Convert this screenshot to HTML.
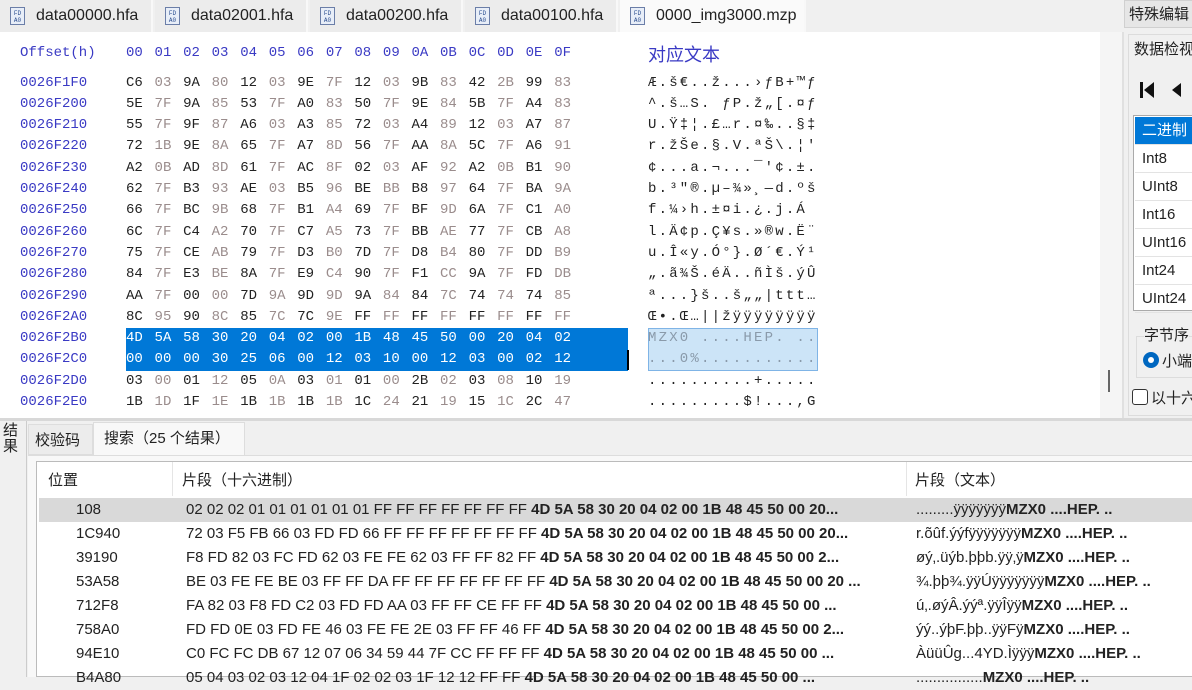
<!DOCTYPE html>
<html><head><meta charset="utf-8"><style>
*{margin:0;padding:0;box-sizing:border-box}
body{width:1192px;height:677px;overflow:hidden;background:#f0f0f0;position:relative;font-family:"Liberation Sans","Noto Sans CJK SC",sans-serif;}
.abs{position:absolute}
.tab{position:absolute;top:0;height:32px;background:#ececec;border-right:2px solid #f8f8f8;font-size:16px;color:#222;line-height:32px;padding-left:36px;white-space:nowrap}
.tab.sel{background:#fafafa}
.ic{position:absolute;left:10px;top:7px;width:15px;height:18px;border:1px solid #6b7ea8;background:#e8eef8;font:6px/7px "Liberation Mono",monospace;color:#2a4d8f;text-align:center;padding-top:2px}
#hex{position:absolute;left:0;top:32px;width:1100px;height:386px;background:#fff}
.r{position:absolute;left:0;height:21px;line-height:21px;white-space:nowrap;font:14px/21px "Liberation Mono",monospace}
.o{position:absolute;left:20px;color:#3a3ac4}
.b{position:absolute;left:126px}
.b span{display:inline-block;width:28.55px;color:#222}
.b span:nth-child(even){color:#9a8c8c}
.t{position:absolute;left:648px;letter-spacing:2.2px;color:#222}
.sel .b span{color:#fff}
.li{height:28px;line-height:28px;padding-left:7px;font-size:15px;border-bottom:1px solid #e3e3e3;color:#222}
.row{position:absolute;left:0;width:1154px;height:24px;line-height:24px;font-size:15px;color:#222;white-space:nowrap}
.row .p{position:absolute;left:37px}
.row .h{position:absolute;left:147px;width:720px;overflow:hidden}
.row .x{position:absolute;left:877px}
.row b{font-weight:bold}
</style></head><body>

<div class="tab" style="left:0;width:153px"><div class="ic">FD<br>A0</div>data00000.hfa</div>
<div class="tab" style="left:155px;width:153px"><div class="ic">FD<br>A0</div>data02001.hfa</div>
<div class="tab" style="left:310px;width:153px"><div class="ic">FD<br>A0</div>data00200.hfa</div>
<div class="tab" style="left:465px;width:153px"><div class="ic">FD<br>A0</div>data00100.hfa</div>
<div class="tab sel" style="left:620px;width:186px"><div class="ic">FD<br>A0</div>0000_img3000.mzp</div>

<div id="hex">
<div class="r" style="top:11px"><span class="o">Offset(h)</span><span class="b" style="color:#3a3ac4"><span style="color:#3a3ac4">00</span><span style="color:#3a3ac4">01</span><span style="color:#3a3ac4">02</span><span style="color:#3a3ac4">03</span><span style="color:#3a3ac4">04</span><span style="color:#3a3ac4">05</span><span style="color:#3a3ac4">06</span><span style="color:#3a3ac4">07</span><span style="color:#3a3ac4">08</span><span style="color:#3a3ac4">09</span><span style="color:#3a3ac4">0A</span><span style="color:#3a3ac4">0B</span><span style="color:#3a3ac4">0C</span><span style="color:#3a3ac4">0D</span><span style="color:#3a3ac4">0E</span><span style="color:#3a3ac4">0F</span></span><span style="position:absolute;left:648px;top:-2px;font:18px 'Liberation Sans','Noto Sans CJK SC',sans-serif;color:#3a3ac4">对应文本</span></div>

<div class="r" style="top:40.5px"><span class="o">0026F1F0</span><span class="b"><span>C6</span><span>03</span><span>9A</span><span>80</span><span>12</span><span>03</span><span>9E</span><span>7F</span><span>12</span><span>03</span><span>9B</span><span>83</span><span>42</span><span>2B</span><span>99</span><span>83</span></span><span class="t">Æ.š€..ž...›ƒB+™ƒ</span></div>
<div class="r" style="top:61.8px"><span class="o">0026F200</span><span class="b"><span>5E</span><span>7F</span><span>9A</span><span>85</span><span>53</span><span>7F</span><span>A0</span><span>83</span><span>50</span><span>7F</span><span>9E</span><span>84</span><span>5B</span><span>7F</span><span>A4</span><span>83</span></span><span class="t">^.š…S. ƒP.ž„[.¤ƒ</span></div>
<div class="r" style="top:83.1px"><span class="o">0026F210</span><span class="b"><span>55</span><span>7F</span><span>9F</span><span>87</span><span>A6</span><span>03</span><span>A3</span><span>85</span><span>72</span><span>03</span><span>A4</span><span>89</span><span>12</span><span>03</span><span>A7</span><span>87</span></span><span class="t">U.Ÿ‡¦.£…r.¤‰..§‡</span></div>
<div class="r" style="top:104.4px"><span class="o">0026F220</span><span class="b"><span>72</span><span>1B</span><span>9E</span><span>8A</span><span>65</span><span>7F</span><span>A7</span><span>8D</span><span>56</span><span>7F</span><span>AA</span><span>8A</span><span>5C</span><span>7F</span><span>A6</span><span>91</span></span><span class="t">r.žŠe.§.V.ªŠ\.¦'</span></div>
<div class="r" style="top:125.7px"><span class="o">0026F230</span><span class="b"><span>A2</span><span>0B</span><span>AD</span><span>8D</span><span>61</span><span>7F</span><span>AC</span><span>8F</span><span>02</span><span>03</span><span>AF</span><span>92</span><span>A2</span><span>0B</span><span>B1</span><span>90</span></span><span class="t">¢...a.¬...¯'¢.±.</span></div>
<div class="r" style="top:147px"><span class="o">0026F240</span><span class="b"><span>62</span><span>7F</span><span>B3</span><span>93</span><span>AE</span><span>03</span><span>B5</span><span>96</span><span>BE</span><span>BB</span><span>B8</span><span>97</span><span>64</span><span>7F</span><span>BA</span><span>9A</span></span><span class="t">b.³"®.µ–¾»¸—d.ºš</span></div>
<div class="r" style="top:168.3px"><span class="o">0026F250</span><span class="b"><span>66</span><span>7F</span><span>BC</span><span>9B</span><span>68</span><span>7F</span><span>B1</span><span>A4</span><span>69</span><span>7F</span><span>BF</span><span>9D</span><span>6A</span><span>7F</span><span>C1</span><span>A0</span></span><span class="t">f.¼›h.±¤i.¿.j.Á</span></div>
<div class="r" style="top:189.6px"><span class="o">0026F260</span><span class="b"><span>6C</span><span>7F</span><span>C4</span><span>A2</span><span>70</span><span>7F</span><span>C7</span><span>A5</span><span>73</span><span>7F</span><span>BB</span><span>AE</span><span>77</span><span>7F</span><span>CB</span><span>A8</span></span><span class="t">l.Ä¢p.Ç¥s.»®w.Ë¨</span></div>
<div class="r" style="top:210.9px"><span class="o">0026F270</span><span class="b"><span>75</span><span>7F</span><span>CE</span><span>AB</span><span>79</span><span>7F</span><span>D3</span><span>B0</span><span>7D</span><span>7F</span><span>D8</span><span>B4</span><span>80</span><span>7F</span><span>DD</span><span>B9</span></span><span class="t">u.Î«y.Ó°}.Ø´€.Ý¹</span></div>
<div class="r" style="top:232.2px"><span class="o">0026F280</span><span class="b"><span>84</span><span>7F</span><span>E3</span><span>BE</span><span>8A</span><span>7F</span><span>E9</span><span>C4</span><span>90</span><span>7F</span><span>F1</span><span>CC</span><span>9A</span><span>7F</span><span>FD</span><span>DB</span></span><span class="t">„.ã¾Š.éÄ..ñÌš.ýÛ</span></div>
<div class="r" style="top:253.5px"><span class="o">0026F290</span><span class="b"><span>AA</span><span>7F</span><span>00</span><span>00</span><span>7D</span><span>9A</span><span>9D</span><span>9D</span><span>9A</span><span>84</span><span>84</span><span>7C</span><span>74</span><span>74</span><span>74</span><span>85</span></span><span class="t">ª...}š..š„„|ttt…</span></div>
<div class="r" style="top:274.8px"><span class="o">0026F2A0</span><span class="b"><span>8C</span><span>95</span><span>90</span><span>8C</span><span>85</span><span>7C</span><span>7C</span><span>9E</span><span>FF</span><span>FF</span><span>FF</span><span>FF</span><span>FF</span><span>FF</span><span>FF</span><span>FF</span></span><span class="t">Œ•.Œ…||žÿÿÿÿÿÿÿÿ</span></div>

<div class="abs" style="left:126px;top:296px;width:502px;height:42.6px;background:#0078d7"></div>
<div class="abs" style="left:627px;top:318px;width:2px;height:20px;background:#000"></div>
<div class="abs" style="left:648px;top:296px;width:170px;height:42.6px;background:#cce4f7;border:1px solid #7fb4e6"></div>
<div class="r sel" style="top:296.1px"><span class="o">0026F2B0</span><span class="b"><span>4D</span><span>5A</span><span>58</span><span>30</span><span>20</span><span>04</span><span>02</span><span>00</span><span>1B</span><span>48</span><span>45</span><span>50</span><span>00</span><span>20</span><span>04</span><span>02</span></span><span class="t" style="color:#8a9aaa">MZX0 ....HEP. ..</span></div>
<div class="r sel" style="top:317.4px"><span class="o">0026F2C0</span><span class="b"><span>00</span><span>00</span><span>00</span><span>30</span><span>25</span><span>06</span><span>00</span><span>12</span><span>03</span><span>10</span><span>00</span><span>12</span><span>03</span><span>00</span><span>02</span><span>12</span></span><span class="t" style="color:#8a9aaa">...0%...........</span></div>
<div class="r" style="top:338.7px"><span class="o">0026F2D0</span><span class="b"><span>03</span><span>00</span><span>01</span><span>12</span><span>05</span><span>0A</span><span>03</span><span>01</span><span>01</span><span>00</span><span>2B</span><span>02</span><span>03</span><span>08</span><span>10</span><span>19</span></span><span class="t">..........+.....</span></div>
<div class="r" style="top:360px"><span class="o">0026F2E0</span><span class="b"><span>1B</span><span>1D</span><span>1F</span><span>1E</span><span>1B</span><span>1B</span><span>1B</span><span>1B</span><span>1C</span><span>24</span><span>21</span><span>19</span><span>15</span><span>1C</span><span>2C</span><span>47</span></span><span class="t">.........$!...,G</span></div>
</div>
<div class="abs" style="left:1100px;top:32px;width:22px;height:386px;background:#f5f5f5"></div>
<div class="abs" style="left:1108px;top:370px;width:2px;height:22px;background:#666"></div>
<div class="abs" style="left:1122px;top:32px;width:2px;height:386px;background:#e0e0e0"></div>

<!-- right panel -->
<div class="abs" style="left:1124px;top:0;width:70px;height:28px;background:#e6e6e6;border:1px solid #d0d0d0;font-size:15px;line-height:27px;padding-left:4px;white-space:nowrap;color:#222">特殊编辑</div>
<div class="abs" style="left:1128px;top:34px;width:70px;height:382px;border:1px solid #dcdcdc"></div>
<div class="abs" style="left:1134px;top:38px;font-size:15px;white-space:nowrap;color:#222">数据检视</div>
<div class="abs" style="left:1140px;top:82px;width:3px;height:16px;background:#111"></div>
<svg class="abs" style="left:1144px;top:82px" width="50" height="16"><path d="M0 8L10 0V16Z" fill="#111"/><path d="M28 8L37 1V15Z" fill="#111"/></svg>
<div class="abs" style="left:1133px;top:115px;width:70px;height:196px;border:1px solid #aaa;background:#fff;padding:1px">
<div class="li" style="background:#0078d7;color:#fff">二进制</div>
<div class="li">Int8</div><div class="li">UInt8</div><div class="li">Int16</div><div class="li">UInt16</div><div class="li">Int24</div><div class="li">UInt24</div>
</div>
<div class="abs" style="left:1136px;top:336px;width:60px;height:42px;border:1px solid #dcdcdc"></div>
<div class="abs" style="left:1144px;top:324px;font-size:15px;background:#f0f0f0;white-space:nowrap;color:#222">字节序</div>
<div class="abs" style="left:1143px;top:352px;width:16px;height:16px;border-radius:50%;background:#0067c0"></div>
<div class="abs" style="left:1148px;top:357px;width:6px;height:6px;border-radius:50%;background:#fff"></div>
<div class="abs" style="left:1162px;top:350px;font-size:15px;white-space:nowrap;color:#222">小端</div>
<div class="abs" style="left:1132px;top:389px;width:16px;height:16px;border:1px solid #333;border-radius:3px;background:#fff"></div>
<div class="abs" style="left:1151px;top:387px;font-size:15px;white-space:nowrap;color:#222">以十六</div>

<!-- bottom -->
<div class="abs" style="left:0;top:418px;width:1192px;height:3px;background:#d8d8d8"></div>
<div class="abs" style="left:0;top:421px;width:27px;height:256px;background:#f0f0f0;border-right:1px solid #ccc"></div>
<div class="abs" style="left:3px;top:423px;width:16px;font-size:15px;line-height:16px;color:#222">结<br>果</div>
<div class="abs" style="left:28px;top:424px;width:65px;height:31px;background:#ececec;border:1px solid #ddd;font-size:15px;line-height:31px;padding-left:6px;color:#222">校验码</div>
<div class="abs" style="left:93px;top:422px;width:152px;height:33px;background:#f8f8f8;border:1px solid #ddd;border-bottom:none;font-size:15px;line-height:32px;padding-left:10px;color:#222;white-space:nowrap">搜索（25 个结果）</div>
<div class="abs" style="left:28px;top:455px;width:1164px;height:222px;background:#f8f8f8;border-top:1px solid #ddd"></div>
<div class="abs" style="left:36px;top:461px;width:1160px;height:216px;background:#fff;border:1px solid #bbb">
<div class="abs" style="left:0;top:0;width:1160px;height:34px;background:#fff;font-size:15px;line-height:38px;color:#222">
<span class="abs" style="left:11px">位置</span>
<span class="abs" style="left:135px;top:0;width:1px;height:34px;background:#e5e5e5"></span>
<span class="abs" style="left:145px">片段（十六进制）</span>
<span class="abs" style="left:869px;top:0;width:1px;height:34px;background:#e5e5e5"></span>
<span class="abs" style="left:878px">片段（文本）</span>
</div>
<div class="row" style="top:36px;background:#d9d9d9;left:2px"><span class="p">108</span><span class="h">02 02 02 01 01 01 01 01 01 FF FF FF FF FF FF FF <b>4D 5A 58 30 20 04 02 00 1B 48 45 50 00 20...</b></span><span class="x">.........ÿÿÿÿÿÿÿ<b>MZX0 ....HEP. ..</b></span></div>
<div class="row" style="top:60px;left:2px"><span class="p">1C940</span><span class="h">72 03 F5 FB 66 03 FD FD 66 FF FF FF FF FF FF FF <b>4D 5A 58 30 20 04 02 00 1B 48 45 50 00 20...</b></span><span class="x">r.õûf.ýýfÿÿÿÿÿÿÿ<b>MZX0 ....HEP. ..</b></span></div>
<div class="row" style="top:84px;left:2px"><span class="p">39190</span><span class="h">F8 FD 82 03 FC FD 62 03 FE FE 62 03 FF FF 82 FF <b>4D 5A 58 30 20 04 02 00 1B 48 45 50 00 2...</b></span><span class="x">øý‚.üýb.þþb.ÿÿ‚ÿ<b>MZX0 ....HEP. ..</b></span></div>
<div class="row" style="top:108px;left:2px"><span class="p">53A58</span><span class="h">BE 03 FE FE BE 03 FF FF DA FF FF FF FF FF FF FF <b>4D 5A 58 30 20 04 02 00 1B 48 45 50 00 20 ...</b></span><span class="x">¾.þþ¾.ÿÿÚÿÿÿÿÿÿÿ<b>MZX0 ....HEP. ..</b></span></div>
<div class="row" style="top:132px;left:2px"><span class="p">712F8</span><span class="h">FA 82 03 F8 FD C2 03 FD FD AA 03 FF FF CE FF FF <b>4D 5A 58 30 20 04 02 00 1B 48 45 50 00 ...</b></span><span class="x">ú‚.øýÂ.ýýª.ÿÿÎÿÿ<b>MZX0 ....HEP. ..</b></span></div>
<div class="row" style="top:156px;left:2px"><span class="p">758A0</span><span class="h">FD FD 0E 03 FD FE 46 03 FE FE 2E 03 FF FF 46 FF <b>4D 5A 58 30 20 04 02 00 1B 48 45 50 00 2...</b></span><span class="x">ýý..ýþF.þþ..ÿÿFÿ<b>MZX0 ....HEP. ..</b></span></div>
<div class="row" style="top:180px;left:2px"><span class="p">94E10</span><span class="h">C0 FC FC DB 67 12 07 06 34 59 44 7F CC FF FF FF <b>4D 5A 58 30 20 04 02 00 1B 48 45 50 00 ...</b></span><span class="x">ÀüüÛg...4YD.Ìÿÿÿ<b>MZX0 ....HEP. ..</b></span></div>
<div class="row" style="top:204px;left:2px"><span class="p">B4A80</span><span class="h">05 04 03 02 03 12 04 1F 02 02 03 1F 12 12 FF FF <b>4D 5A 58 30 20 04 02 00 1B 48 45 50 00 ...</b></span><span class="x">................<b>MZX0 ....HEP. ..</b></span></div>
</div>
</body></html>
